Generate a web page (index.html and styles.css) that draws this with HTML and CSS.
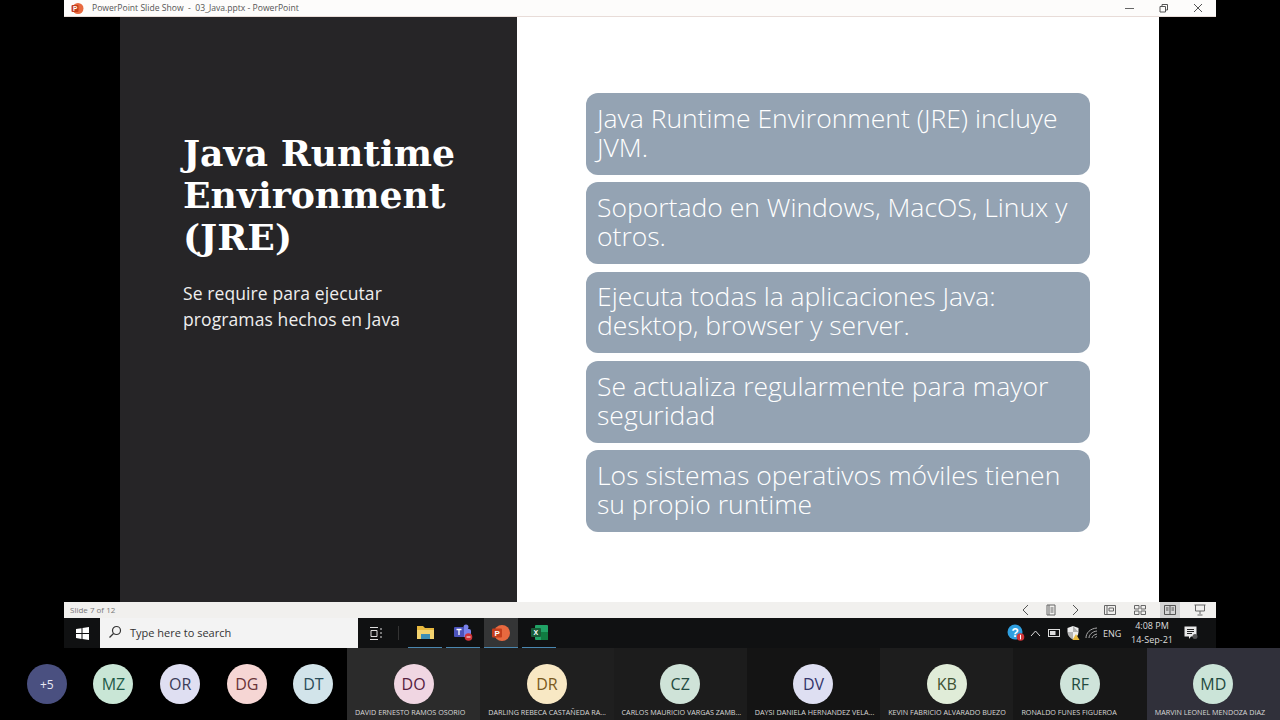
FILE: index.html
```html
<!DOCTYPE html>
<html>
<head>
    <title>PowerPoint Slide Show</title>
    <link rel="stylesheet" href="styles.css">
</head>
<body>
    <div class="window">
        <div class="titlebar">
            <svg class="app-icon" width="13" height="13" viewBox="0 0 13 13">
                <circle cx="7" cy="6.5" r="5.5" fill="#e8693f"/>
                <rect x="0.5" y="3" width="7" height="7" rx="1" fill="#c43e1c"/>
                <text x="2" y="8.8" font-size="6.5" font-weight="700" fill="#fff" font-family="Liberation Sans">P</text>
            </svg>
            <span class="title-text">PowerPoint Slide Show &nbsp;-&nbsp; 03_Java.pptx - PowerPoint</span>
            <div class="win-controls">
                <svg width="10" height="10" viewBox="0 0 10 10"><path d="M0 5.5h9" stroke="#666" fill="none"/></svg>
                <svg width="10" height="10" viewBox="0 0 10 10"><path d="M1 3.5h5.5v5.5H1zM3 3.5V1.5h5.5V7H6.5" stroke="#555" fill="none"/></svg>
                <svg width="10" height="10" viewBox="0 0 10 10"><path d="M1 1l8 8M9 1l-8 8" stroke="#555" fill="none"/></svg>
            </div>
        </div>

        <div class="stage">
            <div class="slide">
                <div class="slide-left">
                    <h1>Java Runtime Environment (JRE)</h1>
                    <p>Se require para ejecutar programas hechos en Java</p>
                </div>
                <div class="slide-right">
                    <div class="card">Java Runtime Environment (JRE) incluye JVM.</div>
                    <div class="card">Soportado en Windows, MacOS, Linux y otros.</div>
                    <div class="card">Ejecuta todas la aplicaciones Java: desktop, browser y server.</div>
                    <div class="card">Se actualiza regularmente para mayor seguridad</div>
                    <div class="card">Los sistemas operativos móviles tienen su propio runtime</div>
                </div>
            </div>
        </div>

        <div class="statusbar">
            <span class="slide-count">Slide 7 of 12</span>
            <div class="view-icons">
                <svg class="ic-prev" width="10" height="12" viewBox="0 0 10 12"><path d="M7 1L2 6l5 5" stroke="#555" fill="none"/></svg>
                <svg class="ic-notes" width="10" height="12" viewBox="0 0 10 12"><path d="M1 1h8v10H1zM3 1v10M4.500 4h3M4.500 6h3M4.500 8h3" stroke="#666" fill="none"/></svg>
                <svg class="ic-next" width="10" height="12" viewBox="0 0 10 12"><path d="M3 1l5 5-5 5" stroke="#555" fill="none"/></svg>
                <svg class="ic-normal" width="12" height="10" viewBox="0 0 12 10"><path d="M.5.5h11v9H.5zM3 .5v9M5 3h4.500v3H5z" stroke="#666" fill="none"/></svg>
                <svg class="ic-sorter" width="12" height="10" viewBox="0 0 12 10"><path d="M.5.5h4.500v3.500H.5zM7 .5h4.500v3.500H7zM.5 6h4.500v3.500H.5zM7 6h4.500v3.500H7z" stroke="#666" fill="none"/></svg>
                <span class="ic-active"><svg width="12" height="10" viewBox="0 0 12 10"><path d="M.5.5h11v9H.5zM6 .5v9M2 3h2.500M2 5h2.500M7.500 3H10M7.500 5H10" stroke="#555" fill="none"/></svg></span>
                <svg class="ic-show" width="12" height="12" viewBox="0 0 12 12"><path d="M.5 1h11M1.500 1v6h9V1M6 7v3M3.500 11h5" stroke="#666" fill="none"/></svg>
            </div>
        </div>

        <div class="taskbar">
            <svg class="ic-start" width="13" height="13" viewBox="0 0 13 13"><path d="M0 2l5.500-.8v4.900H0zM6.500 1L13 0v6.100H6.500zM0 7h5.500v4.900L0 11zM6.500 7H13v6l-6.500-1z" fill="#fff"/></svg>
            <div class="search">
                <svg width="14" height="14" viewBox="0 0 14 14"><circle cx="8.500" cy="5.500" r="4" stroke="#333" fill="none" stroke-width="1.200"/><path d="M5.500 8.500L1.500 12.500" stroke="#333" stroke-width="1.300"/></svg>
                <span>Type here to search</span>
            </div>
            <svg class="ic-taskview" width="14" height="13" viewBox="0 0 14 13"><path d="M1 .5h8M1 12.500h8M2 3.500h6v6H2zM12 1v2M12 5v2M12 9v2" stroke="#ddd" fill="none"/></svg>
            <span class="task-divider"></span>
            <div class="task-apps">
                <span class="task-app">
                    <svg width="17" height="15" viewBox="0 0 17 15"><path d="M0 1h6l2 2h9v11H0z" fill="#e8b93f"/><rect y="5" width="17" height="9" fill="#f3d36f"/><rect x="4" y="9" width="9" height="5" fill="#3f8fb5"/></svg>
                </span>
                <span class="task-app">
                    <svg width="19" height="17" viewBox="0 0 19 17"><circle cx="12" cy="3" r="2.500" fill="#7b83eb"/><rect x="8" y="5" width="9" height="8" rx="2" fill="#7b83eb"/><rect x="0" y="3" width="10" height="10" rx="1" fill="#4b53bc"/><path d="M2.500 5.500h5M5 5.500v5.500" stroke="#fff" stroke-width="1.300"/><circle cx="14.500" cy="13" r="3.800" fill="#d13438"/><path d="M12.500 13h4" stroke="#fff"/></svg>
                </span>
                <span class="task-app is-open">
                    <svg width="18" height="16" viewBox="0 0 18 16"><circle cx="10" cy="8" r="8" fill="#e8693f"/><rect x="0" y="3.500" width="10" height="9" rx="1" fill="#c43e1c"/><text x="2.500" y="10.800" font-size="8" font-weight="700" fill="#fff" font-family="Liberation Sans">P</text></svg>
                </span>
                <span class="task-app">
                    <svg width="17" height="15" viewBox="0 0 17 15"><rect x="4" width="13" height="15" rx="1" fill="#21a366"/><rect x="10" y="7" width="7" height="8" fill="#107c41"/><rect y="3" width="10" height="9" rx="1" fill="#185c37"/><text x="2.500" y="10" font-size="7" font-weight="700" fill="#fff" font-family="Liberation Sans">X</text></svg>
                </span>
            </div>
            <div class="tray">
                <svg class="ic-help" width="18" height="18" viewBox="0 0 18 18"><circle cx="8" cy="8" r="7.500" fill="#2f9fe0"/><text x="4.500" y="12.500" font-size="12" font-weight="700" fill="#fff" font-family="Liberation Sans">?</text><circle cx="13.500" cy="13" r="3.800" fill="#d13438"/><rect x="13" y="10.800" width="1" height="4.500" fill="#fff"/></svg>
                <svg class="ic-caret" width="11" height="7" viewBox="0 0 11 7"><path d="M1 6l4.500-5L10 6" stroke="#ddd" fill="none"/></svg>
                <svg class="ic-battery" width="12" height="8" viewBox="0 0 12 8"><rect x=".5" y=".5" width="11" height="7" fill="none" stroke="#ddd"/><rect x="2" y="2" width="5.500" height="4" fill="#ddd"/></svg>
                <svg class="ic-shield" width="13" height="14" viewBox="0 0 13 14"><path d="M6 0l5.500 2v4c0 3.500-2.500 6-5.500 7.500C3 12 .5 9.500.5 6V2z" fill="#eee"/><path d="M6 0v13.500C3 12 .5 9.500.5 6H11.500" fill="#2a2a2a" opacity=".3"/><path d="M9 8l3.500 6h-7z" fill="#e8b93f"/></svg>
                <svg class="ic-wifi" width="13" height="12" viewBox="0 0 13 12"><path d="M1 11C1 6 5 1.500 12 1M4 11c0-3 3-6.500 8-7M7 11c0-1.500 2-3.500 5-4M10 11c0-.6 1-1.300 2-1.500" stroke="#aaa" fill="none"/></svg>
                <span class="tray-lang">ENG</span>
                <div class="clock"><span>4:08 PM</span><span>14-Sep-21</span></div>
                <svg class="ic-notify" width="15" height="14" viewBox="0 0 15 14"><path d="M.5.5h12v10H7l-2 2.500v-2.500H.5z" fill="#e8e8e8"/><path d="M3 3.500h7M3 5.500h7M3 7.500h5" stroke="#222"/><circle cx="11" cy="10.500" r="2.500" fill="#555"/></svg>
            </div>
        </div>
    </div>

    <div class="gallery">
        <div class="overflow-row">
            <div class="mini"><span class="avatar av-more">+5</span></div>
            <div class="mini"><span class="avatar av-mz">MZ</span></div>
            <div class="mini"><span class="avatar av-or">OR</span></div>
            <div class="mini"><span class="avatar av-dg">DG</span></div>
            <div class="mini"><span class="avatar av-dt">DT</span></div>
        </div>
        <div class="tile t1"><span class="avatar av-do">DO</span><span class="name">DAVID ERNESTO RAMOS OSORIO</span></div>
        <div class="tile t2"><span class="avatar av-dr">DR</span><span class="name">DARLING REBECA CASTAÑEDA RA...</span></div>
        <div class="tile t3"><span class="avatar av-cz">CZ</span><span class="name">CARLOS MAURICIO VARGAS ZAMB...</span></div>
        <div class="tile t4"><span class="avatar av-dv">DV</span><span class="name">DAYSI DANIELA HERNANDEZ VELA...</span></div>
        <div class="tile t5"><span class="avatar av-kb">KB</span><span class="name">KEVIN FABRICIO ALVARADO BUEZO</span></div>
        <div class="tile t6"><span class="avatar av-rf">RF</span><span class="name">RONALDO FUNES FIGUEROA</span></div>
        <div class="tile t7"><span class="avatar av-md">MD</span><span class="name">MARVIN LEONEL MENDOZA DIAZ</span></div>
    </div>
</body>
</html>
```

FILE: styles.css
```css
* {
    box-sizing: border-box;
}
html, body {
    margin: 0;
    height: 720px;
    overflow: hidden;
    background: #000;
    font-family: "Open Sans", "Liberation Sans", sans-serif;
}

/* captured PowerPoint window */
.window {
    width: 1152px;
    height: 648px;
    margin-left: 64px;
    display: flex;
    flex-direction: column;
}
.titlebar {
    height: 17px;
    background: #fdfcfb;
    border-bottom: 1px solid #e8dcd8;
    display: flex;
    align-items: center;
    padding-left: 7px;
}
.app-icon {
    flex-shrink: 0;
}
.title-text {
    margin-left: 8px;
    font-size: 8.600px;
    color: #555;
    white-space: nowrap;
}
.win-controls {
    margin-left: auto;
    display: flex;
    gap: 24px;
    padding-right: 13px;
}

.stage {
    height: 585px;
    padding: 0 57px 0 56px;
    background: #000;
}
.slide {
    height: 100%;
    display: flex;
}
.slide-left {
    width: 397px;
    background: #262527;
    padding: 116px 40px 0 63px;
    color: #fff;
}
.slide-left h1 {
    margin: 0;
    font-family: "DejaVu Serif", serif;
    font-size: 36.200px;
    line-height: 42px;
    font-weight: 700;
}
.slide-left p {
    margin: 21px 0 0;
    width: 240px;
    font-family: "Open Sans", sans-serif;
    font-size: 17.500px;
    letter-spacing: 0.1px;
    line-height: 26px;
    color: #eee;
}
.slide-right {
    flex: 1;
    background: #fff;
    padding: 76px 69px 70px;
    display: grid;
    grid-template-rows: repeat(5, 1fr);
    gap: 7.500px;
}
.card {
    background: #94a3b3;
    border-radius: 12px;
    display: flex;
    align-items: center;
    padding: 0 11px 2px 11px;
    font-family: "Open Sans", sans-serif;
    font-weight: 350;
    font-size: 26.500px;
    line-height: 29px;
    color: #fff;
}

.statusbar {
    height: 16px;
    background: #f1f0ee;
    display: flex;
    align-items: center;
    padding-left: 6px;
}
.slide-count {
    font-size: 8px;
    line-height: 14px;
    color: #777;
}
.view-icons {
    margin-left: auto;
    height: 100%;
    display: flex;
    align-items: center;
}
.ic-prev { margin-right: 15px; }
.ic-notes { margin-right: 14px; }
.ic-next { margin-right: 24px; }
.ic-normal { margin-right: 18px; }
.ic-sorter { margin-right: 14px; }
.ic-active {
    width: 20px;
    height: 100%;
    background: #d4d4d4;
    display: flex;
    align-items: center;
    justify-content: center;
    margin-right: 14px;
}
.ic-show { margin-right: 10px; }

.taskbar {
    height: 30px;
    background: #101112;
    display: flex;
    align-items: center;
    padding-left: 12px;
}
.ic-start {
    margin-right: 11px;
    flex-shrink: 0;
}
.search {
    width: 258px;
    height: 100%;
    background: #f3f3f3;
    display: flex;
    align-items: center;
    gap: 8px;
    padding: 0 0 2px 8px;
    font-size: 11px;
    color: #333;
}
.ic-taskview {
    margin-left: 11px;
}
.task-divider {
    width: 1px;
    height: 14px;
    background: #333;
    margin-left: 15px;
}
.task-apps {
    display: flex;
    height: 100%;
    margin-left: 9px;
    gap: 4px;
}
.task-app {
    width: 34px;
    height: 100%;
    display: flex;
    align-items: center;
    justify-content: center;
    border-bottom: 1px solid #4a87b0;
}
.task-app.is-open {
    background: #343536;
}
.tray {
    margin-left: auto;
    display: flex;
    align-items: center;
    padding-right: 17px;
    color: #ddd;
}
.ic-caret { margin-left: 5px; }
.ic-battery { margin-left: 7px; }
.ic-shield { margin-left: 7px; }
.ic-wifi { margin-left: 5px; }
.tray-lang {
    margin-left: 5px;
    font-size: 9px;
    width: 22px;
}
.clock {
    margin-left: 4px;
    width: 46px;
    display: flex;
    flex-direction: column;
    align-items: center;
    font-size: 9px;
    line-height: 14px;
}
.ic-notify { margin-left: 9px; }

/* participant strip */
.gallery {
    height: 72px;
    display: flex;
}
.overflow-row {
    width: 347px;
    flex-shrink: 0;
    padding-left: 13.500px;
    display: flex;
}
.mini {
    width: 66.670px;
    display: flex;
    justify-content: center;
    padding-top: 16px;
}
.tile {
    flex: 1;
    padding-top: 16px;
    display: flex;
    flex-direction: column;
    align-items: center;
    min-width: 0;
}
.avatar {
    width: 40px;
    height: 40px;
    border-radius: 50%;
    display: flex;
    align-items: center;
    justify-content: center;
    font-family: "Open Sans", sans-serif;
    font-size: 16px;
    flex-shrink: 0;
}
.name {
    margin-top: 2px;
    width: 100%;
    padding-left: 8px;
    font-size: 7.200px;
    line-height: 12px;
    color: #d8d8d8;
    white-space: nowrap;
    overflow: hidden;
}
.t1 { background: #2b2b2b; }
.t2 { background: #1f1f1f; }
.t3 { background: #1c1c1c; }
.t4 { background: #141414; }
.t5 { background: #1d1d1d; }
.t6 { background: #171717; }
.t7 { background: #30303a; }

.av-more { background: #4a5080; color: #e8e8f4; font-size: 12px; }
.av-mz { background: #c9e6d6; color: #1f5a48; }
.av-or { background: #dfdff2; color: #3c3c58; }
.av-dg { background: #f6d6d4; color: #6a3438; }
.av-dt { background: #d2e4ea; color: #2a4c58; }
.av-do { background: #f0d6e2; color: #55203f; }
.av-dr { background: #f8e8c4; color: #7a5a20; }
.av-cz { background: #cfe3d8; color: #234a40; }
.av-dv { background: #dedff2; color: #33356a; }
.av-kb { background: #e0ecd8; color: #3e5234; }
.av-rf { background: #cfe4da; color: #234a40; }
.av-md { background: #cbe4d8; color: #1f4a40; }
```
